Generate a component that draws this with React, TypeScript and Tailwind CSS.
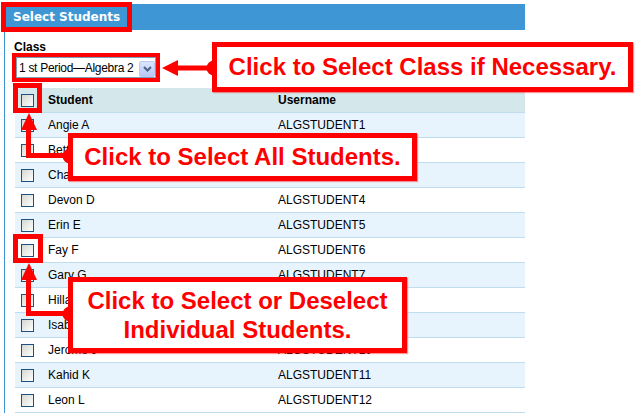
import React from "react";

const students = [
  "Angie A",
  "Betty B",
  "Charles C",
  "Devon D",
  "Erin E",
  "Fay F",
  "Gary G",
  "Hillary H",
  "Isabel I",
  "Jerome J",
  "Kahid K",
  "Leon L",
];

function Checkbox() {
  return (
    <div className="w-[13px] h-[13px] border border-[#1c5180] bg-gradient-to-br from-[#d6d6d0] to-white" />
  );
}

export default function App() {
  return (
    <div
      className="relative w-[640px] h-[415px] overflow-hidden bg-white text-black"
      style={{ fontFamily: '"Liberation Sans", Arial, sans-serif' }}
    >
      <div className="ml-[4px] mt-[4px] w-[521px]">
        <div className="h-[26px] bg-[#3f96d4] flex items-center pl-[9px]">
          <span className="text-white font-bold text-[12px] font-['DejaVu_Sans',sans-serif]">
            Select Students
          </span>
        </div>
        <div className="border-l border-[#3f96d4] pl-[10px] pt-[10px]">
          <div className="text-[12px] leading-[14px] font-bold ml-[-1px]">Class</div>
          <div className="mt-[3px] ml-[1px] w-[140px] h-[21px] border border-[#7f9db9] bg-white flex items-center justify-between">
            <span className="pl-[2px] text-[12px] leading-[14px] whitespace-nowrap tracking-[-0.3px]">
              1 st Period—Algebra 2
            </span>
            <div className="mt-[2px] w-[16px] h-[16px] rounded-[2px] border border-[#b9cbf3] bg-gradient-to-b from-[#dbe5fd] to-[#b6c8f6] flex items-center justify-center">
              <svg width="9" height="6" viewBox="0 0 9 6">
                <path d="M1 1 L4.5 4.5 L8 1" stroke="#4d6185" strokeWidth="2" fill="none" />
              </svg>
            </div>
          </div>
          <div className="mt-[10px] w-[510px]">
            <div className="h-[25px] bg-[#d4e7eb] border-b border-[#c0dcef] flex items-center text-[12px] font-bold">
              <div className="w-[33px] pl-[6px] flex items-center">
                <Checkbox />
              </div>
              <div className="w-[230px]">Student</div>
              <div>Username</div>
            </div>
            {students.map((name, i) => (
              <div
                key={name}
                className={
                  "h-[25px] border-b border-[#c0dcef] flex items-center text-[12px] " +
                  (i % 2 === 0 ? "bg-[#e8f4fd]" : "bg-white")
                }
              >
                <div className="w-[33px] pl-[6px] flex items-center">
                  <Checkbox />
                </div>
                <div className="w-[230px]">{name}</div>
                <div>ALGSTUDENT{i + 1}</div>
              </div>
            ))}
          </div>
        </div>
      </div>

      {/* highlight boxes */}
      <div className="absolute left-[1px] top-[2px] w-[131px] h-[30px] border-[5px] border-[#ff0000]" />
      <div className="absolute left-[12px] top-[53px] w-[148px] h-[29px] border-4 border-[#ff0000]" />
      <div className="absolute left-[13px] top-[83px] w-[29px] h-[30px] border-[5px] border-[#ff0000]" />
      <div className="absolute left-[13px] top-[234px] w-[30px] h-[29px] border-[5px] border-[#ff0000]" />

      {/* arrows */}
      <svg className="absolute left-0 top-0 pointer-events-none" width="640" height="415" viewBox="0 0 640 415">
        <polygon points="162,68 178,60 178,76" fill="#ff0000" />
        <line x1="176" y1="68" x2="214" y2="68" stroke="#ff0000" strokeWidth="5" />
        <circle cx="214" cy="68" r="7.5" fill="#ff0000" />

        <polygon points="29,113 21,130 37,130" fill="#ff0000" />
        <path d="M28.5 128 V155.5 H70" stroke="#ff0000" strokeWidth="5" fill="none" />
        <circle cx="70" cy="156" r="7.5" fill="#ff0000" />

        <polygon points="29,263 21,280 37,280" fill="#ff0000" />
        <path d="M28.5 278 V313.5 H70" stroke="#ff0000" strokeWidth="5" fill="none" />
        <circle cx="70" cy="314" r="7.5" fill="#ff0000" />
      </svg>

      {/* callouts */}
      <div className="absolute left-[212px] top-[42px] w-[421px] h-[50px] border-[5px] border-[#ff0000] bg-white flex items-center justify-center shadow-[1px_1px_1px_rgba(255,0,0,0.4)]">
        <span className="text-[#ff0000] font-bold text-[24px] leading-[28px] whitespace-nowrap">
          Click to Select Class if Necessary.
        </span>
      </div>
      <div className="absolute left-[68px] top-[133px] w-[349px] h-[48px] border-[5px] border-[#ff0000] bg-white flex items-center justify-center shadow-[1px_1px_1px_rgba(255,0,0,0.4)]">
        <span className="text-[#ff0000] font-bold text-[24px] leading-[28px] whitespace-nowrap">
          Click to Select All Students.
        </span>
      </div>
      <div className="absolute left-[68px] top-[277px] w-[339px] h-[76px] border-[5px] border-[#ff0000] bg-white flex flex-col items-center justify-center shadow-[1px_1px_1px_rgba(255,0,0,0.4)]">
        <span className="text-[#ff0000] font-bold text-[24px] leading-[29px] whitespace-nowrap text-center">
          Click to Select or Deselect
          <br />
          Individual Students.
        </span>
      </div>
    </div>
  );
}
